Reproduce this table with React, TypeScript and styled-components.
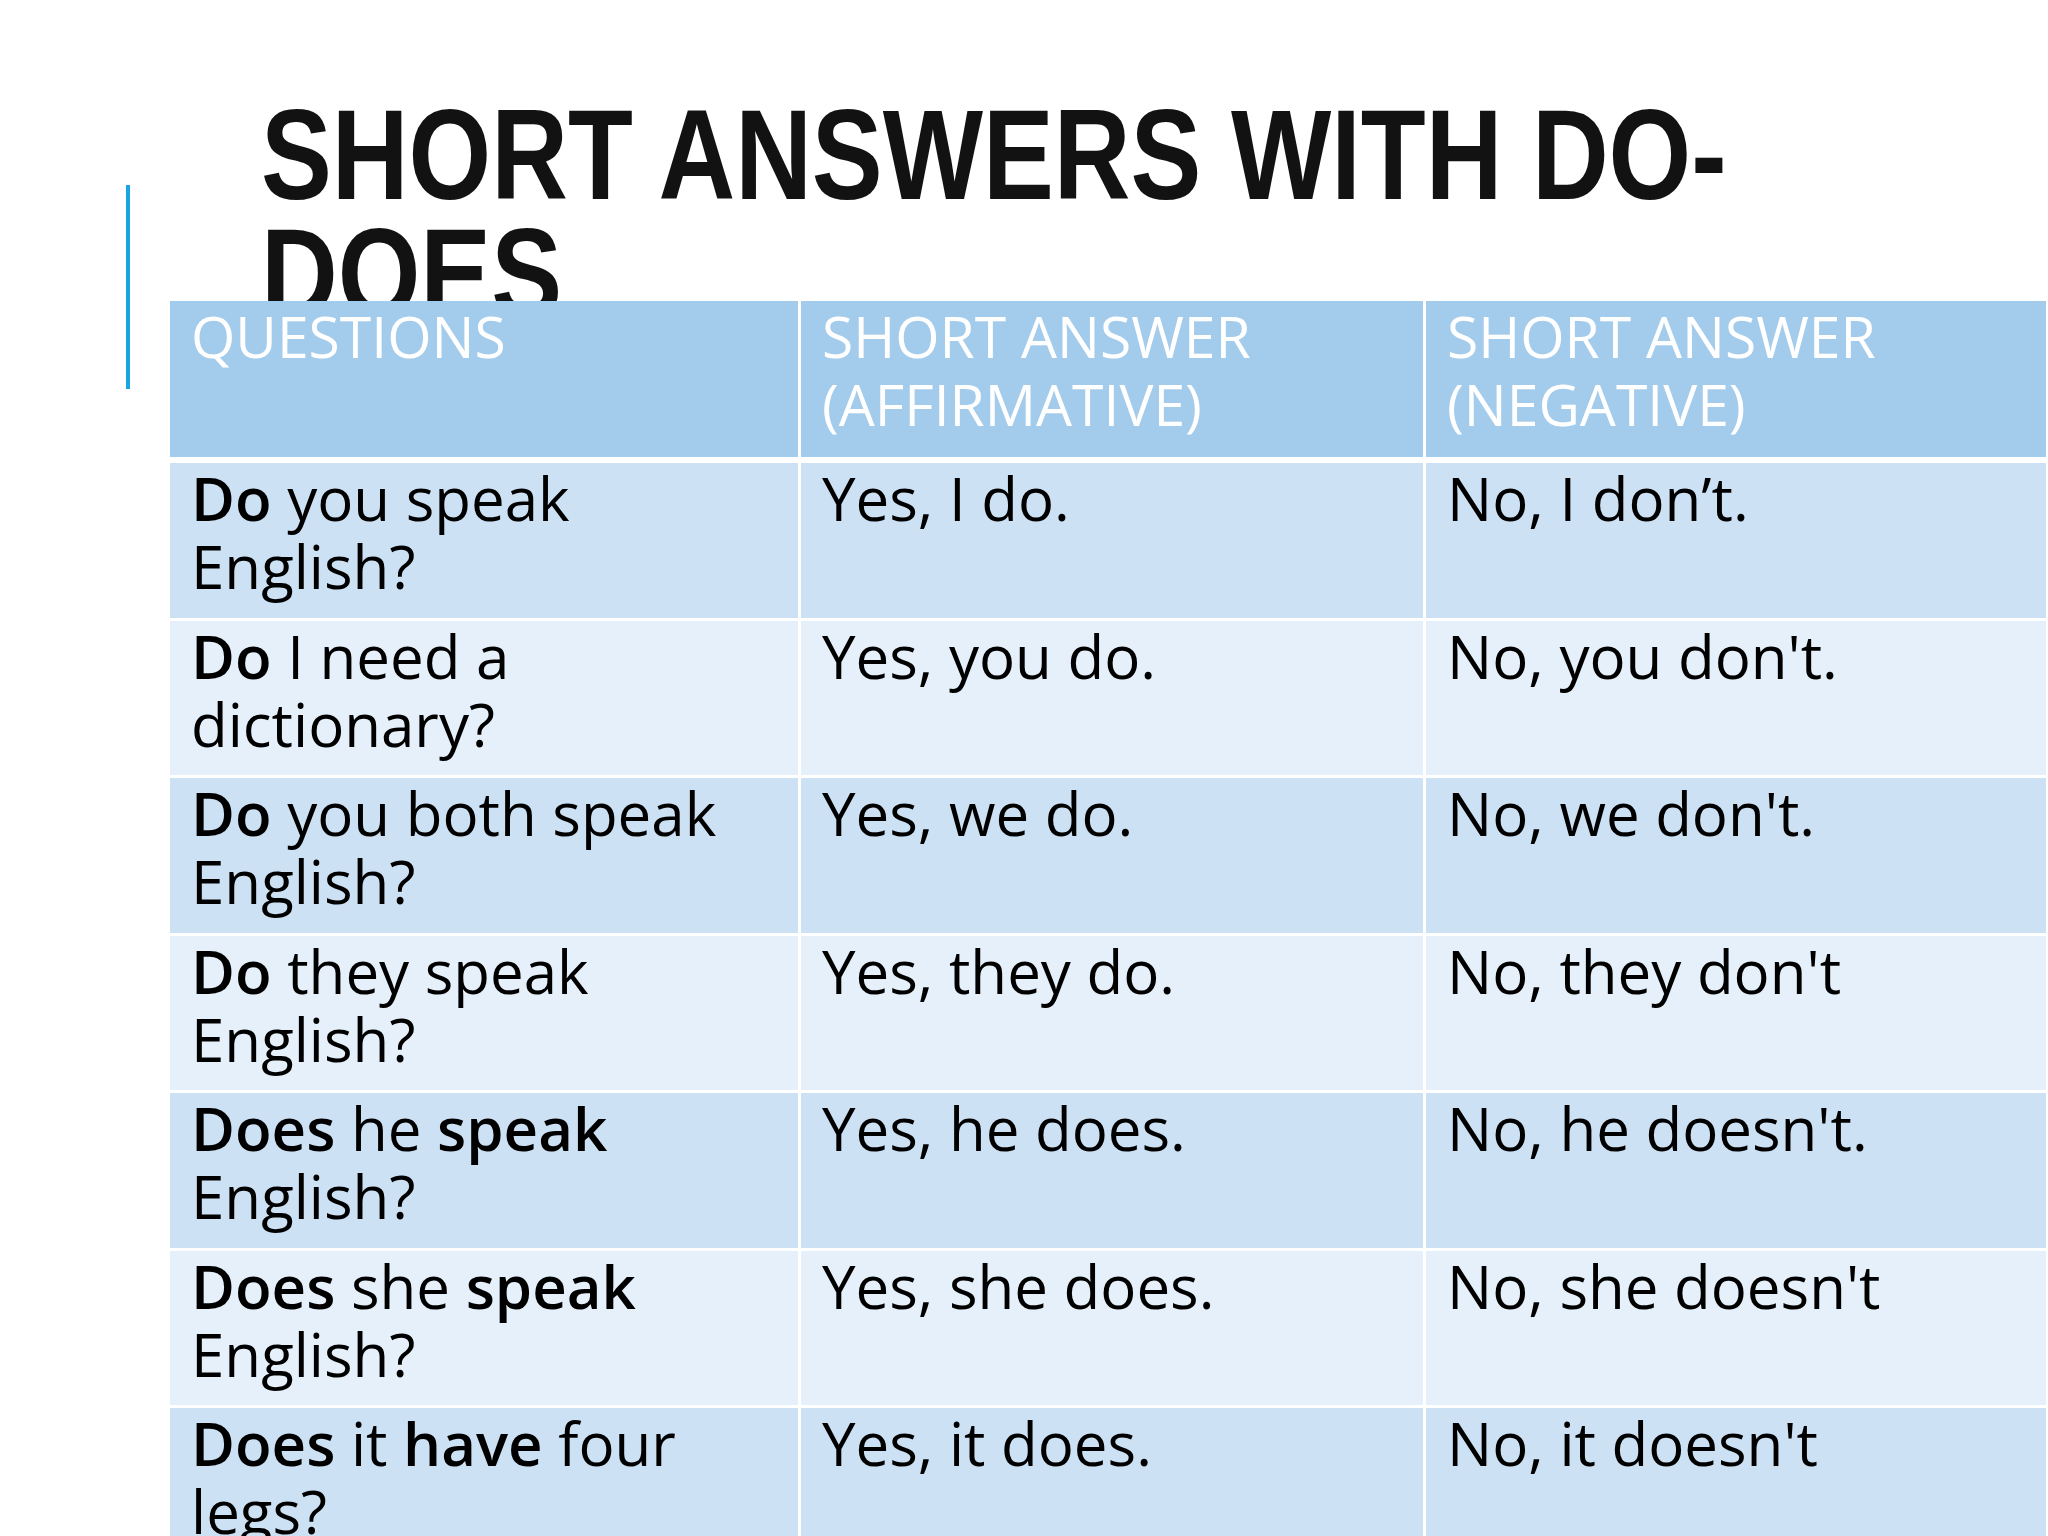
import React from "react";
import styled, { createGlobalStyle } from "styled-components";

const GlobalStyle = createGlobalStyle`
  html, body {
    margin: 0;
    padding: 0;
    background: #ffffff;
    overflow: hidden;
  }
`;

const Slide = styled.div`
  width: 2048px;
  height: 1536px;
  display: grid;
  grid-template-columns: 170px 1876px;
  grid-template-rows: 301px auto;
  overflow: hidden;
  background: #ffffff;
`;

const AccentBar = styled.div`
  grid-column: 1;
  grid-row: 1 / span 2;
  align-self: start;
  width: 4px;
  height: 204px;
  margin: 185px 0 0 126px;
  background: #1ba3e2;
`;

const TitleBox = styled.div`
  grid-column: 2;
  grid-row: 1;
  padding: 95px 0 0 91px;
  min-width: 0;
`;

const Title = styled.h1`
  display: inline-block;
  margin: 0;
  font-family: "Liberation Sans", Arial, sans-serif;
  font-weight: 700;
  font-size: 128px;
  line-height: 119px;
  color: #121212;
  white-space: nowrap;
  transform: scaleX(0.83);
  transform-origin: left top;
`;

const Table = styled.div`
  grid-column: 2;
  grid-row: 2;
  position: relative;
  z-index: 1;
  display: flex;
  flex-direction: column;
  gap: 3px;
  background: #ffffff;
`;

const Row = styled.div<{ $header?: boolean }>`
  display: grid;
  grid-template-columns: 628px 622px 620px;
  column-gap: 3px;
  height: ${(p) => (p.$header ? "156px" : "154.5px")};
  flex-shrink: 0;
  margin-bottom: ${(p) => (p.$header ? "3px" : "0")};
`;

const Cell = styled.div<{ $tone: "head" | "dark" | "light" }>`
  box-sizing: border-box;
  padding: 1px 21px 0 21px;
  font-family: "Open Sans", "Noto Sans", sans-serif;
  font-size: ${(p) => (p.$tone === "head" ? "57px" : "60px")};
  line-height: 68px;
  color: ${(p) => (p.$tone === "head" ? "#ffffff" : "#000000")};
  background: ${(p) =>
    p.$tone === "head" ? "#a3cbeb" : p.$tone === "dark" ? "#cde1f4" : "#e6f0fa"};
`;

const Strong = styled.span`
  font-weight: 600;
`;

type Seg = { t: string; b?: boolean };

const rows: { q: Seg[]; yes: string; no: string }[] = [
  { q: [{ t: "Do", b: true }, { t: " you speak English?" }], yes: "Yes, I do.", no: "No, I don\u2019t." },
  { q: [{ t: "Do", b: true }, { t: " I need a dictionary?" }], yes: "Yes, you do.", no: "No, you don't." },
  { q: [{ t: "Do", b: true }, { t: " you both speak English?" }], yes: "Yes, we do.", no: "No, we don't." },
  { q: [{ t: "Do", b: true }, { t: " they speak English?" }], yes: "Yes, they do.", no: "No, they don't" },
  {
    q: [{ t: "Does", b: true }, { t: " he " }, { t: "speak", b: true }, { t: " English?" }],
    yes: "Yes, he does.",
    no: "No, he doesn't.",
  },
  {
    q: [{ t: "Does", b: true }, { t: " she " }, { t: "speak", b: true }, { t: " English?" }],
    yes: "Yes, she does.",
    no: "No, she doesn't",
  },
  {
    q: [{ t: "Does", b: true }, { t: " it " }, { t: "have", b: true }, { t: " four legs?" }],
    yes: "Yes, it does.",
    no: "No, it doesn't",
  },
];

export default function App() {
  return (
    <>
      <GlobalStyle />
      <Slide>
        <AccentBar />
        <TitleBox>
          <Title>
            SHORT ANSWERS WITH DO-
            <br />
            DOES
          </Title>
        </TitleBox>
        <Table>
          <Row $header>
            <Cell $tone="head">QUESTIONS</Cell>
            <Cell $tone="head">SHORT ANSWER (AFFIRMATIVE)</Cell>
            <Cell $tone="head">SHORT ANSWER (NEGATIVE)</Cell>
          </Row>
          {rows.map((r, i) => {
            const tone = i % 2 === 0 ? "dark" : "light";
            return (
              <Row key={i}>
                <Cell $tone={tone}>
                  {r.q.map((s, j) => (s.b ? <Strong key={j}>{s.t}</Strong> : <React.Fragment key={j}>{s.t}</React.Fragment>))}
                </Cell>
                <Cell $tone={tone}>{r.yes}</Cell>
                <Cell $tone={tone}>{r.no}</Cell>
              </Row>
            );
          })}
        </Table>
      </Slide>
    </>
  );
}
